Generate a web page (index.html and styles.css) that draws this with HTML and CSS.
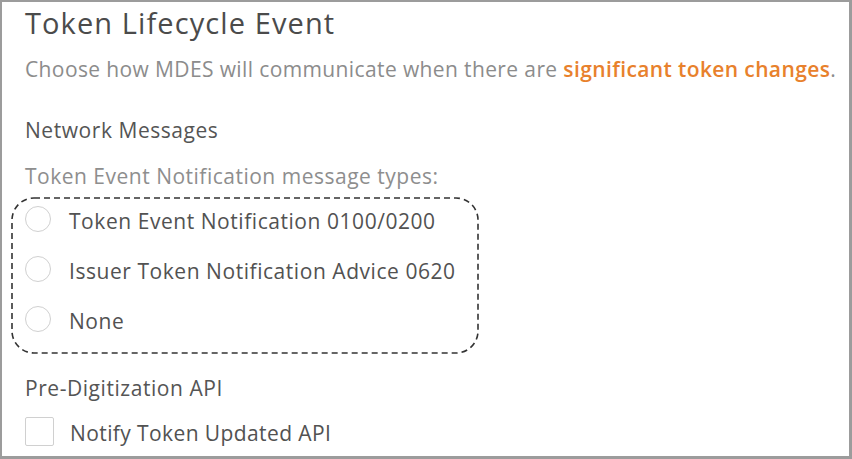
FILE: index.html
```html
<!DOCTYPE html>
<html>
<head>
<meta charset="utf-8">
<link rel="stylesheet" href="styles.css">
</head>
<body>
<div class="frame">
  <h1 class="title">Token Lifecycle Event</h1>
  <p class="lead">Choose how MDES will communicate when there are <span class="accent">significant token changes</span>.</p>
  <div class="section">Network Messages</div>
  <div class="sub">Token Event Notification message types:</div>
  <div class="group">
    <svg class="dash" width="468" height="157" viewBox="0 0 468 157" aria-hidden="true">
      <rect x="1" y="1" width="466" height="155" rx="22" ry="22" fill="none" stroke="#333" stroke-width="1.6" stroke-dasharray="6 4"/>
    </svg>
    <label class="opt"><span class="radio"></span><span>Token Event Notification 0100/0200</span></label>
    <label class="opt"><span class="radio"></span><span>Issuer Token Notification Advice 0620</span></label>
    <label class="opt"><span class="radio"></span><span>None</span></label>
  </div>
  <div class="section sec2">Pre-Digitization API</div>
  <label class="opt chk"><span class="box"></span><span>Notify Token Updated API</span></label>
</div>
</body>
</html>
```
FILE: styles.css
```css
html, body { margin: 0; padding: 0; background: #fff; }
body { font-family: "Open Sans", "Noto Sans", sans-serif; }
.frame {
  box-sizing: border-box;
  width: 852px;
  height: 459px;
  border: 2px solid #9c9c9c;
  border-right-width: 3px;
  border-bottom-width: 3px;
  padding: 3px 0 0 23px;
  overflow: hidden;
}
.title { margin: 0; font-size: 29px; font-weight: 400; letter-spacing: 1.1px; color: #4b4b4b; line-height: 36px; }
.lead { margin: 16px 0 0; font-size: 21px; color: #8c8c8c; line-height: 24px; letter-spacing: 0.38px; white-space: nowrap; }
.accent { color: #e8812c; font-weight: 600; }
.section { margin-top: 37px; font-size: 21px; color: #555; line-height: 24px; letter-spacing: 0.55px; }
.sub { margin-top: 22px; font-size: 21px; color: #8e8e8e; line-height: 24px; letter-spacing: 0.5px; }
.group {
  position: relative;
  margin: 9px 0 0 -14px;
  width: 468px;
  height: 157px;
  box-sizing: border-box;
  padding: 12px 0 0 14px;
  display: flex;
  flex-direction: column;
  gap: 26px;
}
.dash { position: absolute; left: 0; top: 0; }
.opt {
  display: flex;
  align-items: flex-start;
  gap: 18px;
  font-size: 21px;
  line-height: 24px;
  letter-spacing: 0.55px;
  color: #525252;
}
.radio {
  flex: none;
  width: 26px;
  height: 26px;
  margin-top: -3px;
  border: 1.6px solid #d0d0d0;
  border-radius: 50%;
  box-sizing: border-box;
}
.sec2 { margin-top: 22px; }
.chk { margin-top: 21px; gap: 16px; letter-spacing: 0.4px; }
.box {
  flex: none;
  width: 29px;
  height: 29px;
  margin-top: -4px;
  border: 1.6px solid #d0d0d0;
  border-radius: 2px;
  box-sizing: border-box;
}
```
